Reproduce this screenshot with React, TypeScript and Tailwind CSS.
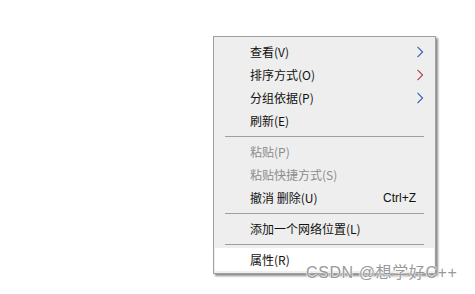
import React from 'react';

type Row =
  | { kind: 'item'; label: string; arrow?: string; shortcut?: string; disabled?: boolean; hover?: boolean }
  | { kind: 'sep' };

const rows: Row[] = [
  { kind: 'item', label: '查看(V)', arrow: '#2f62b0' },
  { kind: 'item', label: '排序方式(O)', arrow: '#b0404f' },
  { kind: 'item', label: '分组依据(P)', arrow: '#2f62b0' },
  { kind: 'item', label: '刷新(E)' },
  { kind: 'sep' },
  { kind: 'item', label: '粘贴(P)', disabled: true },
  { kind: 'item', label: '粘贴快捷方式(S)', disabled: true },
  { kind: 'item', label: '撤消 删除(U)', shortcut: 'Ctrl+Z' },
  { kind: 'sep' },
  { kind: 'item', label: '添加一个网络位置(L)' },
  { kind: 'sep' },
  { kind: 'item', label: '属性(R)', hover: true },
];

const Chevron = ({ color }: { color: string }) => (
  <svg width="8" height="12" viewBox="0 0 8 12" className="block">
    <path d="M1.5 0.8 L6.6 6 L1.5 11.2" fill="none" stroke={color} strokeWidth="1.1" />
  </svg>
);

export default function App() {
  return (
    <div className="relative w-[475px] h-[294px] bg-white overflow-hidden font-['Noto_Sans_CJK_SC','Microsoft_YaHei',sans-serif]">
      <div className="ml-[213px] mt-[36px] w-[223px] bg-[#eeeeee] border border-[#a0a0a0] px-px pt-[3px] pb-[2px] shadow-[2px_2px_2px_rgba(0,0,0,0.45)]">
        {rows.map((r, i) =>
          r.kind === 'sep' ? (
            <div key={i} className="h-[8px] flex items-center px-[10px]">
              <div className="h-px w-full bg-[#a0a0a0]" />
            </div>
          ) : (
            <div
              key={i}
              className={`h-[23px] flex items-center pl-[35px] pr-[10px] text-[12px] leading-none ${
                r.hover ? 'bg-white' : ''
              } ${r.disabled ? 'text-[#8c8c8c]' : 'text-[#111111]'}`}
            >
              <span className="flex-1">{r.label}</span>
              {r.shortcut && <span className="mr-[8px] font-['Liberation_Sans',sans-serif] text-[12px]">{r.shortcut}</span>}
              {r.arrow && <Chevron color={r.arrow} />}
            </div>
          )
        )}
      </div>
      <div className="absolute left-[306px] top-[265px] text-[16px] tracking-[0.6px] leading-none text-[#999999] [text-shadow:0_0_1px_#fff,0_0_1px_#fff,0_0_2px_#fff] font-['Liberation_Sans','Noto_Sans_CJK_SC',sans-serif]">
        CSDN @想学好C++
      </div>
    </div>
  );
}
